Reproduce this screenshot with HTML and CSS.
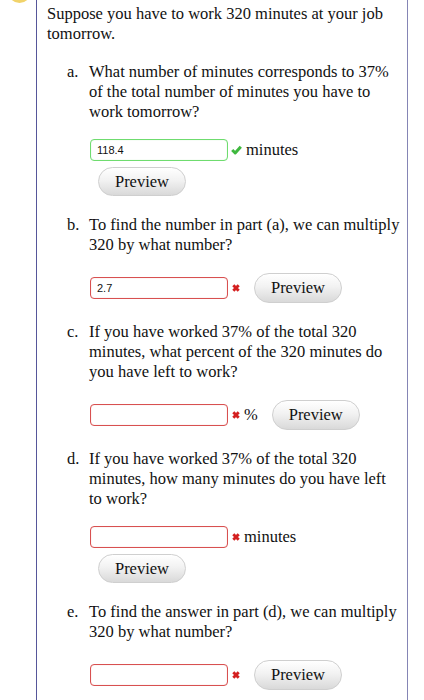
FILE: index.html
```html
<!DOCTYPE html>
<html>
<head>
<meta charset="utf-8">
<link rel="stylesheet" href="styles.css">
</head>
<body>
<div class="mark"></div>
<div class="box">
  <p class="intro">Suppose you have to work 320 minutes at your job tomorrow.</p>
  <div class="parts">
    <div class="part">
      <div class="q"><span class="lbl">a.</span><span class="txt">What number of minutes corresponds to 37% of the total number of minutes you have to work tomorrow?</span></div>
      <div class="row r-first">
        <span class="inp ok">118.4</span>
        <svg class="ico" width="11" height="10" viewBox="0 0 11 10"><path d="M1.2 5 L4.2 8 L9.8 1.8" fill="none" stroke="#3fb83f" stroke-width="3" stroke-linejoin="round"/></svg>
        <span class="unit">minutes</span>
      </div>
      <div class="btnline"><span class="btn">Preview</span></div>
    </div>
    <div class="part">
      <div class="q"><span class="lbl">b.</span><span class="txt">To find the number in part (a), we can multiply 320 by what number?</span></div>
      <div class="row r-inline">
        <span class="inp bad">2.7</span>
        <svg class="ico x" width="8" height="8" viewBox="0 0 8 8"><path d="M1.3 1.3 L6.7 6.7 M6.7 1.3 L1.3 6.7" stroke="#d42020" stroke-width="2.9"/></svg>
        <span class="btn gap">Preview</span>
      </div>
    </div>
    <div class="part">
      <div class="q"><span class="lbl">c.</span><span class="txt">If you have worked 37% of the total 320 minutes, what percent of the 320 minutes do you have left to work?</span></div>
      <div class="row r-inline">
        <span class="inp bad"></span>
        <svg class="ico x" width="8" height="8" viewBox="0 0 8 8"><path d="M1.3 1.3 L6.7 6.7 M6.7 1.3 L1.3 6.7" stroke="#d42020" stroke-width="2.9"/></svg>
        <span class="unit pct">%</span>
        <span class="btn gap">Preview</span>
      </div>
    </div>
    <div class="part">
      <div class="q"><span class="lbl">d.</span><span class="txt">If you have worked 37% of the total 320 minutes, how many minutes do you have left to work?</span></div>
      <div class="row r-first">
        <span class="inp bad"></span>
        <svg class="ico x" width="8" height="8" viewBox="0 0 8 8"><path d="M1.3 1.3 L6.7 6.7 M6.7 1.3 L1.3 6.7" stroke="#d42020" stroke-width="2.9"/></svg>
        <span class="unit">minutes</span>
      </div>
      <div class="btnline"><span class="btn">Preview</span></div>
    </div>
    <div class="part">
      <div class="q"><span class="lbl">e.</span><span class="txt">To find the answer in part (d), we can multiply 320 by what number?</span></div>
      <div class="row r-inline">
        <span class="inp bad"></span>
        <svg class="ico x" width="8" height="8" viewBox="0 0 8 8"><path d="M1.3 1.3 L6.7 6.7 M6.7 1.3 L1.3 6.7" stroke="#d42020" stroke-width="2.9"/></svg>
        <span class="btn gap">Preview</span>
      </div>
    </div>
  </div>
</div>
</body>
</html>
```
FILE: styles.css
```css
html, body {
  margin: 0;
  padding: 0;
  background: #ffffff;
}
body {
  font-family: "Liberation Serif", "Times New Roman", serif;
  font-size: 16.5px;
  color: #111111;
  position: relative;
  height: 700px;
  overflow: hidden;
}
.mark {
  position: absolute;
  left: 8px;
  top: -20px;
  width: 23px;
  height: 23px;
  border-radius: 50%;
  background: #f1d36a;
}
.box {
  margin-left: 36px;
  width: 372px;
  min-height: 700px;
  border-left: 1.5px solid #56569a;
  border-right: 1.5px solid #8585b5;
  padding: 4px 6px 0 10px;
  box-sizing: border-box;
}
.intro {
  margin: 0;
  line-height: 20px;
}
.parts {
  margin-top: 18px;
  padding-left: 20px;
}
.part {
  margin-bottom: 19px;
}
.q {
  display: flex;
  line-height: 20px;
}
.lbl {
  width: 22px;
  flex: none;
}
.txt {
  flex: 1;
}
.row {
  display: flex;
  align-items: center;
  padding-left: 23px;
}
.r-first {
  margin-top: 17px;
}
.r-inline {
  margin-top: 18px;
}
.r-inline .btn {
  height: 30px;
}
.inp {
  display: inline-block;
  box-sizing: border-box;
  width: 138px;
  height: 22px;
  border-radius: 4px;
  font-family: "Liberation Sans", Arial, sans-serif;
  font-size: 11px;
  line-height: 20px;
  padding-left: 6px;
  color: #111;
  background: #fff;
}
.inp.ok {
  border: 1.5px solid #6fdc6f;
  box-shadow: inset 0 0 1px #a8eaa8;
}
.inp.bad {
  border: 1.5px solid #d85050;
  box-shadow: inset 0 0 1px #eaa0a0;
}
.ico {
  margin-left: 3px;
  flex: none;
}
.ico.x {
  margin-left: 4px;
}
.unit {
  margin-left: 4px;
  line-height: 20px;
}
.btnline {
  margin-top: 6px;
  padding-left: 31px;
  display: flex;
}
.btn {
  display: inline-flex;
  align-items: center;
  justify-content: center;
  box-sizing: border-box;
  width: 88px;
  height: 29px;
  border: 1px solid #cfcfcf;
  border-radius: 15px;
  background: linear-gradient(#ffffff 0%, #f2f2f2 45%, #d9d9d9 100%);
  font-size: 16.5px;
  color: #111;
}
.btn.gap {
  margin-left: 14px;
}
```
